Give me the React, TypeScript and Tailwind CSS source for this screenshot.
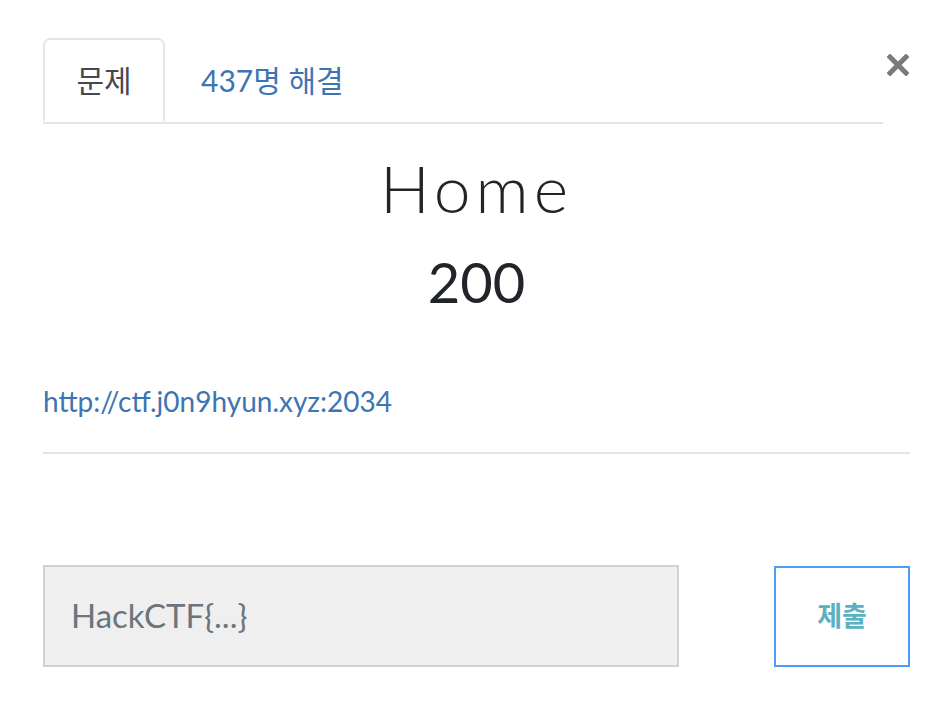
export default function App() {
  return (
    <div
      className="w-[950px] h-[718px] bg-white pl-[43px] pr-[40px] pt-[38px]"
      style={{ fontFamily: 'Lato, "Noto Sans CJK KR", sans-serif' }}
    >
      <div className="flex items-start">
        <ul className="flex flex-1 border-b-2 border-[#e2e5e9]">
          <li className="-mb-[2px] flex h-[84px] w-[122px] items-center justify-center rounded-t-[7px] border-2 border-[#e2e5e9] border-b-white bg-white text-[30px] text-[#45494e]">
            문제
          </li>
          <li className="flex h-[84px] items-center pl-[36px] text-[30px] text-[#3d74b2]">437명 해결</li>
        </ul>
        <button className="ml-[3px] mt-[15px] flex h-[24px] w-[24px] items-center justify-center">
          <svg width="22" height="22" viewBox="0 0 22 22">
            <path d="M3 3L19 19M19 3L3 19" stroke="#7a7a7a" strokeWidth="5" strokeLinecap="square" />
          </svg>
        </button>
      </div>

      <div className="text-center text-[#212529]">
        <h2 className="mt-[24px] text-[66px] font-light leading-[80px] tracking-[5px]">Home</h2>
        <p className="mt-[22px] text-[56px] leading-[64px]">200</p>
      </div>

      <div className="mt-[66px] pb-[30px] border-b-2 border-[#e4e4e4]">
        <a className="text-[28px] text-[#3d74b2]">http://ctf.j0n9hyun.xyz:2034</a>
      </div>

      <div className="mt-[111px] flex items-center justify-between">
        <div className="flex h-[102px] w-[636px] items-center border-2 border-[#d0d3d6] bg-[#efefef] pl-[26px] text-[33px] text-[#6c757d]">
          HackCTF{"{...}"}
        </div>
        <button className="flex h-[101px] w-[136px] items-center justify-center border-2 border-[#4b9bf7] bg-white text-[27px] font-bold text-[#5bb0c2]">
          제출
        </button>
      </div>
    </div>
  );
}
